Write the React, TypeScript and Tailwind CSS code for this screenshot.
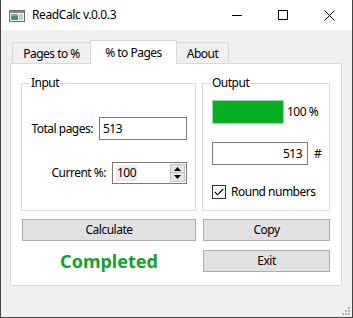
import React from "react";

const font = { fontFamily: '"Segoe UI", "Noto Sans", "Liberation Sans", sans-serif' };

function AppIcon() {
  return (
    <svg width="16" height="12" viewBox="0 0 16 12" className="block">
      <rect x="0.5" y="0.5" width="15" height="11" fill="#f4f4f4" stroke="#6d6d6d" />
      <rect x="1" y="1" width="14" height="2" fill="#8a8a8a" />
      <rect x="2" y="4" width="7" height="6" fill="#3f8f86" />
      <rect x="2" y="4" width="7" height="2" fill="#6fb6a8" />
      <rect x="10" y="4" width="4" height="6" fill="#c9c9c9" />
    </svg>
  );
}

function TitleBar() {
  return (
    <div className="h-[30px] bg-white flex items-center shrink-0">
      <div className="ml-[8px] mt-[1px]">
        <AppIcon />
      </div>
      <div className="ml-[7px] text-[12px] text-black leading-none tracking-[-0.4px]" style={font}>
        ReadCalc v.0.0.3
      </div>
      <div className="ml-auto flex h-full">
        <div className="w-[46px] h-full flex items-center justify-center">
          <div className="w-[10px] h-px bg-black mt-[1px]" />
        </div>
        <div className="w-[46px] h-full flex items-center justify-center">
          <div className="w-[10px] h-[10px] border border-black" />
        </div>
        <div className="w-[46px] h-full flex items-center justify-center">
          <svg width="11" height="11" viewBox="0 0 11 11">
            <path d="M0.5 0.5 L10.5 10.5 M10.5 0.5 L0.5 10.5" stroke="#000" strokeWidth="1" />
          </svg>
        </div>
      </div>
    </div>
  );
}

function Button({ label, className }: { label: string; className?: string }) {
  return (
    <div
      className={
        "h-[22px] bg-[#e1e1e1] border border-[#adadad] flex items-center justify-center text-[12px] text-black " +
        (className || "")
      }
    >
      {label}
    </div>
  );
}

function Group({ title, className, children }: { title: string; className?: string; children: React.ReactNode }) {
  return (
    <div className={"relative border border-[#dcdcdc] " + (className || "")}>
      <span className="absolute top-[-9px] left-[8px] bg-white px-[1px] text-[12px] leading-[16px] text-black">
        {title}
      </span>
      {children}
    </div>
  );
}

function SpinBox() {
  return (
    <div className="w-[75px] h-[22px] border border-[#7a7a7a] bg-white flex items-center">
      <div className="ml-[3px] px-[1px] bg-[#ececec] text-[12px] leading-[16px] text-black">100</div>
      <div className="ml-auto mr-[1px] flex flex-col gap-0 h-[18px] w-[15px]">
        <div className="h-[9px] bg-[#e5e5e5] border border-[#c4c4c4] flex items-center justify-center">
          <svg width="7" height="4" viewBox="0 0 7 4">
            <path d="M3.5 0 L7 4 L0 4 Z" fill="#000" />
          </svg>
        </div>
        <div className="h-[9px] bg-[#e5e5e5] border border-[#c4c4c4] border-t-0 flex items-center justify-center">
          <svg width="7" height="4" viewBox="0 0 7 4">
            <path d="M0 0 L7 0 L3.5 4 Z" fill="#000" />
          </svg>
        </div>
      </div>
    </div>
  );
}

export default function App() {
  return (
    <div
      className="w-[353px] h-[318px] bg-[#f0f0f0] border-l border-r border-b border-[#444444] flex flex-col overflow-hidden relative tracking-[-0.5px]"
      style={font}
    >
      <TitleBar />
      <div className="flex-1 flex flex-col px-[9px] pt-[10px]">
        {/* tabs */}
        <div className="h-[23px] flex items-end pl-[2px] relative z-10">
          <div className="w-[78px] h-[21px] border-l border-t border-[#d9d9d9] bg-[#f0f0f0] flex items-center justify-center text-[12px] text-black pt-[2px]">
            Pages to %
          </div>
          <div className="w-[87px] h-[24px] -mb-px border-l border-t border-r border-[#d9d9d9] bg-white flex items-center justify-center text-[12px] text-black">
            % to Pages
          </div>
          <div className="w-[52px] h-[21px] border-t border-r border-[#d9d9d9] bg-[#f0f0f0] flex items-center justify-center text-[12px] text-black pt-[2px]">
            About
          </div>
        </div>
        {/* pane */}
        <div className="w-[332px] h-[223px] border border-[#d9d9d9] bg-white flex flex-col pl-[10px] pt-[19px]">
          <div className="flex gap-[6px]">
            <Group title="Input" className="w-[175px] h-[128px]">
              <div className="flex flex-col items-end pr-[8px] pt-[33px] text-[12px] text-black">
                <div className="flex items-center gap-[6px]">
                  <span>Total pages:</span>
                  <div className="w-[88px] h-[23px] border border-[#7a7a7a] bg-white flex items-center pl-[3px]">
                    513
                  </div>
                </div>
                <div className="flex items-center gap-[6px] mt-[22px]">
                  <span>Current %:</span>
                  <SpinBox />
                </div>
              </div>
            </Group>
            <Group title="Output" className="w-[128px] h-[128px]">
              <div className="flex flex-col pl-[9px] pt-[16px] text-[12px] text-black">
                <div className="flex items-center gap-[3px]">
                  <div className="w-[72px] h-[24px] border border-[#a6cfad] bg-[#06b025]" />
                  <span>100 %</span>
                </div>
                <div className="flex items-center gap-[6px] mt-[18px]">
                  <div className="w-[96px] h-[23px] border border-[#7a7a7a] bg-white flex items-center justify-end pr-[5px]">
                    513
                  </div>
                  <span>#</span>
                </div>
                <div className="flex items-center gap-[5px] mt-[18px]">
                  <div className="w-[14px] h-[14px] border border-[#333333] bg-white flex items-center justify-center">
                    <svg width="10" height="8" viewBox="0 0 10 8">
                      <path d="M0.8 4 L3.6 6.8 L9.2 1" stroke="#000" strokeWidth="1.1" fill="none" />
                    </svg>
                  </div>
                  <span>Round numbers</span>
                </div>
              </div>
            </Group>
          </div>
          <div className="flex gap-[7px] mt-[8px]">
            <Button label="Calculate" className="w-[174px] ml-px" />
            <Button label="Copy" className="w-[127px]" />
          </div>
          <div className="flex gap-[7px] mt-[9px]">
            <div className="w-[174px] ml-px h-[22px] flex items-center justify-center text-[18px] font-bold tracking-normal text-[#13a22b]">
              Completed
            </div>
            <Button label="Exit" className="w-[127px]" />
          </div>
        </div>
      </div>
      {/* size grip */}
      <div className="absolute right-[2px] bottom-[2px] w-[8px] h-[8px]">
        <svg width="8" height="8" viewBox="0 0 8 8">
          <rect x="6" y="0" width="2" height="2" fill="#b4b4b4" />
          <rect x="3" y="3" width="2" height="2" fill="#b4b4b4" />
          <rect x="6" y="3" width="2" height="2" fill="#b4b4b4" />
          <rect x="0" y="6" width="2" height="2" fill="#b4b4b4" />
          <rect x="3" y="6" width="2" height="2" fill="#b4b4b4" />
          <rect x="6" y="6" width="2" height="2" fill="#b4b4b4" />
        </svg>
      </div>
    </div>
  );
}
